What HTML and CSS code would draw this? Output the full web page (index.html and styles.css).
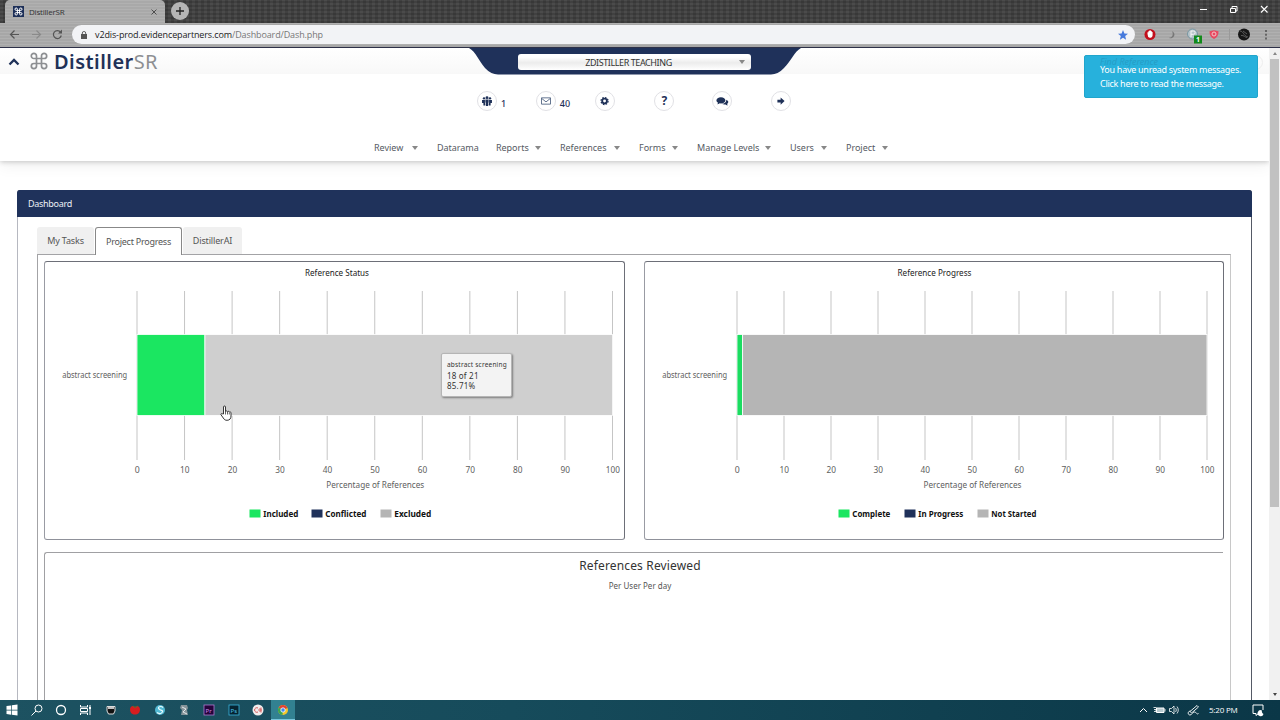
FILE: index.html
```
<!DOCTYPE html>
<html lang="en">
  <head>
    <meta charset="utf-8" />
    <title>DistillerSR</title>
    <link rel="stylesheet" href="styles.css">
  </head>
  <body>
    <div class="tab-strip">
      <div class="browser-tab">
        <svg class="favicon" viewBox="0 0 10 10"><rect width="10" height="10" fill="#1d2f58" /><path d="M4 4V2.900A1.100 1.100 0 1 0 2.900 4h4.200A1.100 1.100 0 1 0 6 2.900v4.200A1.100 1.100 0 1 0 7.100 6H2.900A1.100 1.100 0 1 0 4 7.100z" fill="none" stroke="#fff" stroke-width=".9" /></svg>
        <span class="tab-title">DistillerSR</span>
        <svg class="tab-close" viewBox="0 0 6 6"><path d="M.5.5l5 5M5.500.5l-5 5" stroke="#444" stroke-width=".9" /></svg>
      </div>
      <div class="new-tab"><svg viewBox="0 0 18 18"><path d="M9 5v8M5 9h8" stroke="#222" stroke-width="1.3" /></svg></div>
      <svg class="window-buttons" viewBox="0 0 90 20">
        <path d="M10 9.500h7" stroke="#fff" />
        <path d="M40.500 8.500h5v4h-5zM42 8.500V6.500h5v4.500h-1.500" fill="none" stroke="#fff" />
        <path d="M71 6l6.500 6.500M77.500 6L71 12.500" stroke="#fff" stroke-width="1.100" />
      </svg>
    </div>
    <div class="toolbar">
      <svg class="nav-buttons" viewBox="0 0 72 24">
        <path d="M19 11.500h-8M14.500 7.500l-4 4 4 4" fill="none" stroke="#555" stroke-width="1.200" />
        <path d="M32 11.500h8M36.500 7.500l4 4-4 4" fill="none" stroke="#8a8a8a" stroke-width="1.200" />
        <path d="M60.500 9A4 4 0 1 0 61.300 12.500" fill="none" stroke="#555" stroke-width="1.200" />
        <path d="M62 6.500v4h-4z" fill="#555" />
      </svg>
      <div class="address">
        <svg class="lock" viewBox="0 0 6 8"><path d="M0 3h6v5H0z" fill="#555" /><path d="M1.300 3.500V2a1.700 1.500 0 0 1 3.400 0v1.500" fill="none" stroke="#555" stroke-width=".9" /></svg>
        <span class="host">v2dis-prod.evidencepartners.com</span><span class="path">/Dashboard/Dash.php</span>
        <svg class="star" viewBox="0 0 10 10"><path d="M5 0l1.400 3.400L10 3.700 7.200 6l.9 3.700L5 7.700 1.900 9.700 2.800 6 0 3.700l3.600-.3z" fill="#4679dc" /></svg>
      </div>
      <svg class="extensions" viewBox="0 0 145 24">
        <circle cx="15" cy="11.500" r="5.500" fill="#c20f1c" />
        <path d="M12.500 11V9.200h1V8h1v-.8h1.200V8h1v1h.9v3.500a2.500 2.500 0 0 1-4.500 1.200z" fill="#fff" />
        <path d="M37 8.200a3.600 3.600 0 1 1-3 6.500c3.200.2 4.800-3.200 3-6.500z" fill="#777" />
        <circle cx="57.500" cy="11" r="5" fill="#b7c4ca" stroke="#7796a2" />
        <path d="M56 14V8h2.500a1.600 1.600 0 0 1 0 3.300H56" fill="none" stroke="#f5f5f5" />
        <rect x="59" y="12.500" width="8" height="8" fill="#128a1b" />
        <text x="61" y="19.200" class="badge">1</text>
        <path d="M74.500 8.200l4.500-1 4.500 1c.2 3.600-1.400 6.300-4.500 7.800-3.100-1.500-4.700-4.200-4.500-7.800z" fill="#e74a60" />
        <circle cx="79" cy="11" r="2" fill="none" stroke="#f4c4ca" />
        <path d="M94.500 6v11" stroke="#999" />
        <circle cx="109" cy="11.500" r="6" fill="#171717" />
        <path d="M105 8c4 .5 3 4.500 8 6M106 12.500c3-.5 4 2 6 2M108 8l4 3" fill="none" stroke="#777" stroke-width=".7" />
        <path d="M131 7v2M131 10.700v2M131 14.400v2" stroke="#555" stroke-width="1.600" />
      </svg>
    </div>

    <div class="viewport">
      <div class="page">
        <div class="header">
          <div class="top-strip">
            <svg class="collapse" viewBox="0 0 12 8"><path d="M1.500 6.500L6 2l4.500 4.500" fill="none" stroke="#1f3158" stroke-width="2.300" /></svg>
            <svg class="logo-mark" viewBox="0 0 18 18"><path d="M6.500 6.500V3.900A2.600 2.600 0 1 0 3.900 6.500h10.200A2.600 2.600 0 1 0 11.500 3.900v10.200A2.600 2.600 0 1 0 14.100 11.500H3.900A2.600 2.600 0 1 0 6.500 14.100z" fill="none" stroke="#8d8f92" stroke-width="1.700" /></svg>
            <div class="logo"><b>Distiller</b>SR</div>
          </div>
          <div class="project">
            <svg class="project-shape" viewBox="0 0 332 27"><path d="M0 0h332c-7 4-10 13-17 20q-6 6.500-13 6.500H29q-7 0-13-6.500C10 13 7 4 0 0z" fill="#1f315a" /></svg>
            <div class="project-select"><span>ZDISTILLER TEACHING</span><i class="caret"></i></div>
          </div>
          <div class="shortcuts">
            <div class="shortcut">
              <svg viewBox="0 0 20 20"><g fill="#1f3158"><circle cx="10" cy="6.300" r="1.600" /><circle cx="6.700" cy="7" r="1.300" /><circle cx="13.300" cy="7" r="1.300" /><path d="M8.200 8.400h3.600V12h-.7v3.500H8.900V12h-.7zM4.500 8.800h3.200v3.700h.5V15H6v-2.800H4.500zM12.300 8.800h3.200v3.400H14V15h-2.200v-2.500h.5z" /></g></svg>
              <span>1</span>
            </div>
            <div class="shortcut">
              <svg viewBox="0 0 20 20"><path d="M5 6.500h10v7H5zM5 7l5 4 5-4" fill="none" stroke="#536684" /></svg>
              <span>40</span>
            </div>
            <div class="shortcut">
              <svg viewBox="0 0 20 20"><circle cx="9.500" cy="10" r="2.600" fill="none" stroke="#1f3158" stroke-width="2" /><circle cx="9.500" cy="10" r="3.900" fill="none" stroke="#1f3158" stroke-width="1.400" stroke-dasharray="1.700 1.363" /></svg>
            </div>
            <div class="shortcut">
              <div class="question">?</div>
            </div>
            <div class="shortcut">
              <svg viewBox="0 0 20 20"><path d="M8.800 5.700c3 0 5 1.500 5 3.500s-2 3.500-5 3.500l-1.300-.1c-.9.800-1.900 1.100-2.900 1.100.6-.5.900-1 1-1.700-1.100-.7-1.800-1.700-1.800-2.800 0-2 2-3.500 5-3.500z" fill="#1f3158" /><path d="M14.700 8.500c1.400.5 2.300 1.400 2.300 2.600 0 .9-.5 1.600-1.400 2.100.2.600.6 1.200 1.100 1.600-1.100 0-2-.3-2.700-1-1.700.2-3.200-.1-4.100-.8 3-.2 5.200-2.200 4.800-4.500z" fill="#1f3158" /></svg>
            </div>
            <div class="shortcut">
              <svg viewBox="0 0 20 20"><path d="M6 8.600h3.600V6l4.400 4.100-4.400 4.100v-2.600H6z" fill="#1f3158" /></svg>
            </div>
          </div>
          <div class="menu">
            <div class="menu-item">Review<i class="caret"></i></div>
            <div class="menu-item">Datarama</div>
            <div class="menu-item">Reports<i class="caret"></i></div>
            <div class="menu-item">References<i class="caret"></i></div>
            <div class="menu-item">Forms<i class="caret"></i></div>
            <div class="menu-item">Manage Levels<i class="caret"></i></div>
            <div class="menu-item">Users<i class="caret"></i></div>
            <div class="menu-item">Project<i class="caret"></i></div>
          </div>
          <div class="find-box"></div>
          <div class="message">
            <div class="find-label">Find Reference</div>
            <div>You have unread system messages.</div>
            <div>Click here to read the message.</div>
          </div>
        </div>

        <div class="dashboard">
          <div class="dashboard-title">Dashboard</div>
          <div class="dashboard-body">
            <div class="tabs">
              <div class="tab">My Tasks</div>
              <div class="tab active">Project Progress</div>
              <div class="tab">DistillerAI</div>
            </div>
            <div class="tab-content">
              <div class="charts">
                <div class="chart"><svg id="status-chart" viewBox="0 0 580 278"></svg></div>
                <div class="chart"><svg id="progress-chart" viewBox="0 0 580 278"></svg></div>
              </div>
              <div class="reviewed">
                <div class="reviewed-title">References Reviewed</div>
                <div class="reviewed-subtitle">Per User Per day</div>
              </div>
            </div>
          </div>
        </div>

        <div class="tooltip">
          <div class="tooltip-name">abstract screening</div>
          <div>18 of 21</div>
          <div>85.71%</div>
        </div>
        <svg class="cursor" viewBox="0 0 12 16"><path d="M3.500 9V2a1 1 0 0 1 2 0v4.500c.3-.8 1.700-.8 2 .2.400-.7 1.600-.5 1.800.4.500-.5 1.700-.3 1.700.8V11c0 2.500-1.200 4.300-4 4.300-2 0-2.800-.8-3.700-2.300L1 9.800c-.4-.8.6-1.600 1.300-1z" fill="#fff" stroke="#222" stroke-width=".9" /><path d="M5.500 6.500v3M7.500 7v2.500M9.300 7.500v2" stroke="#222" stroke-width=".7" /></svg>
      </div>
      <div class="scrollbar">
        <i class="arrow-up"></i>
        <div class="thumb"></div>
        <i class="arrow-down"></i>
      </div>
    </div>

    <div class="taskbar">
      <div class="apps">
        <div class="app"><svg viewBox="0 0 16 16"><path d="M2.500 4l4.700-.6v4.300H2.500zM7.900 3.300l5.600-.8v5.200H7.900zM2.500 8.400h4.700v4.300l-4.700-.6zM7.900 8.400h5.600v5.200l-5.600-.8z" fill="#fff" /></svg></div>
        <div class="app"><svg viewBox="0 0 16 16"><circle cx="9.500" cy="6.500" r="3.500" fill="none" stroke="#fff" /><path d="M7 9l-4.500 4.500" stroke="#fff" /></svg></div>
        <div class="app"><svg viewBox="0 0 16 16"><circle cx="8" cy="8" r="4.500" fill="none" stroke="#fff" stroke-width="1.300" /></svg></div>
        <div class="app"><svg viewBox="0 0 16 16"><path d="M2.500 3v2h7V3M2.500 13v-2h7v2M2.500 6.500h7v3h-7zM12 3v10" fill="none" stroke="#fff" /><path d="M11 5h2v2h-2z" fill="#fff" /></svg></div>
        <div class="app"><svg viewBox="0 0 16 16"><path d="M4 4.500h8v4.500l-1.500 3h-5L4 9z" fill="#111" stroke="#ddd" /><path d="M5 6h6" stroke="#fff" stroke-width="1.500" /></svg></div>
        <div class="app"><svg viewBox="0 0 16 16"><path d="M8 5c2-2 5-.5 5 2.500 0 3-2 5-5 5s-5-2-5-5S6 3 8 5z" fill="#d51d20" /><path d="M6 4l2 1.500L10.500 4" stroke="#4e762f" fill="none" /></svg></div>
        <div class="app"><svg viewBox="0 0 16 16"><circle cx="8" cy="8" r="5" fill="#52b9d3" /><path d="M11 5.500c-2-2-6-.5-4 1.500s5 1 3 3.500-5 0-5 0" fill="none" stroke="#e9fbff" stroke-width="1.200" /></svg></div>
        <div class="app"><svg viewBox="0 0 16 16"><path d="M5 3h6l1 3-1 2 1 5H5l1-5-2-2z" fill="#86949a" /><path d="M6 5l4 2-3 3 4 2" stroke="#e3e8ea" fill="none" /></svg></div>
        <div class="app"><svg viewBox="0 0 16 16"><rect x="3" y="3" width="10" height="10" fill="#26033b" stroke="#af79d1" stroke-width=".8" /><text x="4.600" y="10.500" class="pr">Pr</text></svg></div>
        <div class="app"><svg viewBox="0 0 16 16"><rect x="3" y="3" width="10" height="10" fill="#062331" stroke="#3bb5de" stroke-width=".8" /><text x="4.500" y="10.500" class="ps">Ps</text></svg></div>
        <div class="app"><svg viewBox="0 0 16 16"><circle cx="8" cy="8" r="5.500" fill="#f1eded" /><path d="M8 6a2.300 2.300 0 1 0 0 4M11 5.500v5M9 8c0-2 2-1.500 2 0s-2 2-2 0" fill="none" stroke="#d24c4c" stroke-width=".9" /></svg></div>
        <div class="app open"><svg viewBox="0 0 16 16"><circle cx="8" cy="8" r="5" fill="#f5c72b" /><path d="M8 8L3.700 5.500A5 5 0 0 1 12.500 6z" fill="#e14133" /><path d="M8 8l-.5 5A5 5 0 0 1 3.700 5.500z" fill="#37a553" /><circle cx="8" cy="8" r="2.200" fill="#4287ed" stroke="#fff" stroke-width=".8" /></svg></div>
      </div>
      <div class="tray">
        <svg class="tray-icons" viewBox="0 0 64 20">
          <path d="M1 12l3.500-3.500L8 12" fill="none" stroke="#fff" />
          <path d="M17.500 8h7.500v4.500h-7.500z" fill="#b9cbd0" stroke="#fff" /><path d="M26 9v2.500M14.500 7.500h3M15 9.500h2v2h-2" stroke="#fff" fill="none" stroke-width=".8" />
          <path d="M30.500 8.500h2L35 6v8l-2.500-2.500h-2z" fill="none" stroke="#fff" stroke-width=".8" /><path d="M36.500 8c1 1.200 1 2.800 0 4M38 6.500c1.700 2 1.700 5 0 7" fill="none" stroke="#fff" stroke-width=".8" />
          <path d="M51 11.500l7-6 1.500 1.500-7 6zM51.500 11c-3 0-3 4-.5 4 2 0 2.500-3 4.500-3s2 3 4 1.500" fill="none" stroke="#fff" stroke-width=".9" />
        </svg>
        <span class="clock">5:20 PM</span>
        <svg class="notice" viewBox="0 0 14 14"><path d="M12 7V2H2v8.500h3v2L7.500 10.500" fill="none" stroke="#fff" /><path d="M11 7.500a3 3 0 1 0 1.500 3.500 3 3 0 0 1-1.500-3.500z" fill="#fff" /></svg>
      </div>
    </div>

    <script>
      // bar values are percentages, legend entries are [label, color, x, text width]
      function drawChart(id, options) {
        var left = 92;
        var svg = "";
        var step = options.width / 10;
        svg += text(options.title, options.center, 15, "chart-title", options.titleWidth);

        for (var i = 0; i <= 10; i++) {
          var x = left + i * step;
          svg += `<line x1="${x}" y1="30" x2="${x}" y2="199" class="grid-line" />`;
          svg += text(i * 10, x + 0.3, 212, "axis-label", i == 0 ? 5 : i == 10 ? 14 : 9.5);
        }

        var start = left;
        options.bars.forEach(function (bar) {
          var width = (bar[0] * options.width) / 100;
          svg += `<rect x="${start}" y="73.500" width="${width}" height="81" fill="${bar[1]}" class="bar" />`;
          start += width;
        });

        svg += text("abstract screening", 49.7, 117, "axis-label", 65);
        svg += text("Percentage of References", left + options.width / 2 + 0.5, 227, "axis-title", 98);

        options.legend.forEach(function (item) {
          svg += `<rect x="${item[2] + 0.5}" y="248.500" width="11" height="8" fill="${item[1]}" />`;
          svg += text(item[0], item[2] + 14.3 + item[3] / 2, 255.5, "legend-label", item[3]);
        });
        document.getElementById(id).innerHTML = svg;
      }

      function text(label, x, y, name, width) {
        return `<text x="${x}" y="${y}" class="${name}" textLength="${width}" lengthAdjust="spacingAndGlyphs">${label}</text>`;
      }

      drawChart("status-chart", {
        title: "Reference Status",
        center: 292,
        titleWidth: 64,
        width: 475.5,
        bars: [[14.29, "#1be661"], [85.71, "#cfcfcf"]],
        legend: [
          ["Included", "#1be661", 204, 35],
          ["Conflicted", "#1f315a", 266, 41],
          ["Excluded", "#b5b5b5", 335, 37]
        ]
      });
      drawChart("progress-chart", {
        title: "Reference Progress",
        center: 289.5,
        titleWidth: 74,
        width: 470,
        bars: [[1.2, "#1bdc61"], [98.8, "#b5b5b5"]],
        legend: [
          ["Complete", "#1be661", 193, 38],
          ["In Progress", "#1f315a", 259, 45],
          ["Not Started", "#b5b5b5", 332, 45]
        ]
      });
    </script>
  </body>
</html>
```
FILE: styles.css
```
* {
  box-sizing: border-box;
}
body {
  margin: 0;
  width: 1280px;
  height: 720px;
  overflow: hidden;
  font-family: "Noto Sans", sans-serif;
  font-size: 9px;
  color: #333;
  background-color: #fff;
}
svg {
  display: block;
  flex: none;
}

/* browser window */
.tab-strip {
  display: flex;
  height: 23px;
  padding-left: 5px;
  background-color: #444;
  background-image: repeating-linear-gradient(0deg, rgba(0, 0, 0, 0.14) 0 2px, transparent 2px 4px),
    repeating-linear-gradient(90deg, #4b4b4b 0 3px, #414141 3px 6px);
}
.browser-tab {
  display: flex;
  align-items: center;
  width: 160px;
  padding: 0 8px;
  border-radius: 5px 5px 0 0;
  background: repeating-linear-gradient(#b1b1b1 0 1px, #a9a9a9 1px 3px);
}
.favicon {
  width: 11px;
  height: 11px;
}
.tab-title {
  flex: 1;
  margin-left: 5px;
  font-family: "Open Sans", sans-serif;
  font-size: 8px;
  line-height: 12px;
  letter-spacing: -0.2px;
}
.tab-close {
  width: 6px;
  height: 6px;
}
.new-tab {
  width: 18px;
  height: 18px;
  margin: 2px 0 0 6px;
  border-radius: 50%;
  background-color: #b5b5b5;
}
.window-buttons {
  width: 90px;
  height: 20px;
  margin-left: auto;
}
.toolbar {
  display: flex;
  height: 25px;
  border-bottom: 1px solid #2d3048;
  background: repeating-linear-gradient(#b0b0b0 0 1px, #a7a7a7 1px 3px);
}
.nav-buttons {
  width: 72px;
  height: 24px;
}
.address {
  display: flex;
  align-items: center;
  width: 1063px;
  height: 19px;
  margin-top: 2px;
  padding: 0 7px 0 9px;
  border-radius: 10px;
  background-color: #f2f3f6;
  font-family: "Open Sans", sans-serif;
  font-size: 9px;
  letter-spacing: -0.12px;
}
.lock {
  width: 6px;
  height: 8px;
  margin-right: 8px;
}
.host {
  color: #222;
}
.path {
  color: #777;
}
.star {
  width: 10px;
  height: 10px;
  margin-left: auto;
}
.extensions {
  width: 145px;
  height: 24px;
}
.badge {
  font-size: 7px;
  font-weight: bold;
  fill: #fff;
}
.viewport {
  display: flex;
  height: 652px;
}
.page {
  position: relative;
  width: 1269px;
  overflow: hidden;
}
.scrollbar {
  display: flex;
  flex-direction: column;
  align-items: center;
  width: 11px;
  padding: 4px 0;
  background-color: #f1f1f1;
}
.thumb {
  width: 9px;
  height: 448px;
  margin-top: 4px;
  background-color: #c1c1c1;
}
.arrow-up,
.arrow-down {
  border: 2px solid transparent;
}
.arrow-up {
  border-top: none;
  border-bottom: 3px solid #888;
}
.arrow-down {
  margin-top: auto;
  border-bottom: none;
  border-top: 3px solid #444;
}

/* page header */
.header {
  height: 113px;
  box-shadow: 0 1px 5px rgba(0, 0, 0, 0.2), 0 6px 14px rgba(0, 0, 0, 0.05);
}
.top-strip {
  display: flex;
  align-items: center;
  height: 26px;
  padding-left: 8px;
  background: linear-gradient(#fff, #f8f8f8);
}
.collapse {
  width: 12px;
  height: 8px;
  margin-top: 2px;
}
.logo-mark {
  width: 18px;
  height: 18px;
  margin-left: 10px;
}
.logo {
  margin: 2px 0 0 6px;
  font-size: 20px;
  line-height: 26px;
  letter-spacing: 0.2px;
  color: #8d8f92;
}
.logo b {
  font-weight: 600;
  letter-spacing: 0.45px;
  color: #1f3158;
}
.project {
  position: absolute;
  top: 0;
  left: 469px;
  width: 332px;
}
.project-shape {
  width: 332px;
  height: 27px;
}
.project-select {
  position: absolute;
  top: 6px;
  left: 49px;
  display: flex;
  align-items: center;
  justify-content: center;
  width: 233px;
  height: 16px;
  padding-right: 12px;
  border-radius: 3px;
  background: linear-gradient(#fff 20%, #ececec 55%, #fff);
  letter-spacing: -0.42px;
}
.project-select .caret {
  position: absolute;
  right: 6px;
}
.caret {
  border: 3px solid transparent;
  border-top: 4px solid #888;
  border-bottom: none;
}
.shortcuts {
  display: grid;
  grid-template-columns: repeat(6, 58.8px);
  margin: 17px 0 0 477px;
}
.shortcut {
  display: flex;
  height: 20px;
  color: #1f3158;
}
.shortcut svg,
.question {
  width: 20px;
  height: 20px;
  border: 1px solid #e1e1e5;
  border-radius: 50%;
}
.shortcut span {
  margin: 6px 0 0 4px;
  font-weight: 500;
  line-height: 14px;
}
.question {
  margin-left: 1px;
  font-size: 12px;
  font-weight: bold;
  line-height: 18px;
  text-align: center;
}
.menu {
  display: grid;
  grid-template-columns: 63px 59px 64px 79px 58px 93px 56px 61px;
  margin: 30px 0 0 374px;
  line-height: 14px;
  letter-spacing: -0.03px;
  color: #555a63;
}
.menu-item {
  display: flex;
  align-items: center;
  justify-content: space-between;
  padding-right: 19px;
  white-space: nowrap;
}
.find-box {
  position: absolute;
  top: 7px;
  right: 6px;
  width: 60px;
  height: 15px;
  border: 1px solid #eee;
  border-radius: 8px;
}
.message {
  position: absolute;
  top: 7px;
  left: 1084px;
  width: 174px;
  height: 43px;
  padding: 1px 0 0 15px;
  border: 1px solid #20a5cc;
  border-radius: 2px;
  background-color: #27b1dc;
  color: #fff;
  line-height: 13.5px;
  letter-spacing: -0.28px;
  white-space: nowrap;
}
.find-label {
  height: 6px;
  line-height: 9px;
  font-style: italic;
  letter-spacing: 0;
  color: #259dc6;
}

/* dashboard */
.dashboard {
  width: 1235px;
  height: 530px;
  margin: 29px 0 0 17px;
  border: 1px solid #555a66;
  border-left: 1px solid #b6b8c0;
  border-radius: 3px 3px 0 0;
}
.dashboard-title {
  height: 27px;
  margin: -1px -1px 0;
  padding-left: 11px;
  border-radius: 3px 3px 0 0;
  background-color: #1f325b;
  color: #eceff5;
  line-height: 27px;
  letter-spacing: -0.3px;
}
.dashboard-body {
  padding: 10px 20px 0 19px;
}
.tabs {
  display: flex;
  gap: 1px;
  height: 28px;
}
.tab {
  width: 59px;
  height: 27px;
  border-radius: 3px 3px 0 0;
  background-color: #f0f0f0;
  line-height: 27px;
  text-align: center;
  letter-spacing: -0.15px;
  color: #555;
}
.tab:first-child {
  width: 57px;
}
.tab.active {
  position: relative;
  width: 87px;
  height: 28px;
  border: 1px solid #888;
  border-bottom: none;
  background-color: #fff;
  letter-spacing: -0.25px;
}
.tab-content {
  height: 470px;
  margin-top: -1px;
  padding: 6px 7px 0 6px;
  border: 1px solid #a3a3a6;
  border-right-color: #c8c8c8;
}
.charts {
  display: grid;
  grid-template-columns: 581px 580px;
  gap: 19px;
}
.chart {
  height: 279px;
  border: 1px solid #6d6f78;
  border-left-color: #999ba3;
  border-bottom-color: #8f919a;
  border-radius: 3px;
}
.chart svg {
  width: 580px;
  height: 278px;
  margin: -1px 0 0;
}
.chart text {
  font-family: "Noto Sans", sans-serif;
  font-size: 8px;
  text-anchor: middle;
  fill: #606060;
}
.chart .chart-title {
  fill: #222;
}
.chart .legend-label {
  font-weight: bold;
  fill: #111;
}
.grid-line {
  stroke: #c5c5c5;
}
.bar {
  stroke: #fff;
  stroke-width: 0.8;
}
.reviewed {
  height: 190px;
  margin-top: 12px;
  border: 1px solid #a0a0a3;
  border-right: none;
  border-radius: 3px 0 0 0;
  text-align: center;
}
.reviewed-title {
  margin: 3px 0 0 12px;
  font-size: 12px;
  line-height: 20px;
  letter-spacing: 0.15px;
}
.reviewed-subtitle {
  margin-left: 12px;
  font-size: 8px;
  line-height: 19px;
  color: #555;
}
.tooltip {
  position: absolute;
  top: 305px;
  left: 441px;
  width: 71px;
  height: 44px;
  padding: 6px 0 0 5px;
  border: 1px solid #b5b5b5;
  border-radius: 2px;
  background-color: #f3f3f3;
  box-shadow: 1px 1px 2px rgba(0, 0, 0, 0.4);
  font-size: 8px;
  line-height: 10.5px;
  letter-spacing: 0.2px;
  white-space: nowrap;
}
.tooltip-name {
  font-size: 6.5px;
}
.cursor {
  position: absolute;
  top: 357px;
  left: 220px;
  width: 12px;
  height: 16px;
}

/* windows taskbar */
.taskbar {
  display: flex;
  justify-content: space-between;
  height: 20px;
  background: linear-gradient(90deg, #1d5261, #164b5b 40%, #0b3747);
}
.apps {
  display: flex;
}
.app {
  display: flex;
  align-items: center;
  justify-content: center;
  width: 24.6px;
  height: 20px;
}
.app svg {
  width: 16px;
  height: 16px;
}
.app.open {
  background-color: #328191;
  border-bottom: 1px solid #79c7dd;
}
.pr,
.ps {
  font-size: 6px;
  fill: #c98eeb;
}
.ps {
  fill: #4cc4ee;
}
.tray {
  display: flex;
  align-items: center;
  color: #fff;
}
.tray-icons {
  width: 64px;
  height: 20px;
}
.clock {
  width: 28px;
  margin-left: 6px;
  font-family: "Open Sans", sans-serif;
  font-size: 8px;
  line-height: 18px;
  letter-spacing: -0.2px;
  white-space: nowrap;
}
.notice {
  width: 14px;
  height: 14px;
  margin: 0 15px 0 14px;
}
```
